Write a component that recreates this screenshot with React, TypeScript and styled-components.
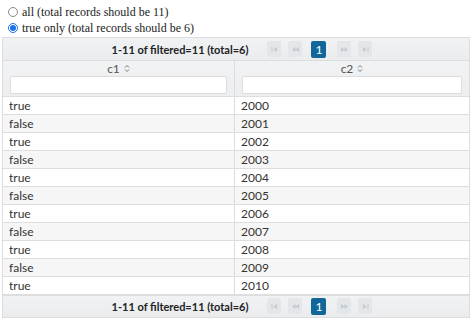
import React from "react";
import styled, { createGlobalStyle } from "styled-components";

const Global = createGlobalStyle`
  body { margin: 0; background: #fff; }
`;

const Page = styled.div`
  padding: 4px 4px 0 2px;
`;

const RadioRow = styled.label`
  display: flex;
  align-items: center;
  height: 16px;
  font-family: "Liberation Serif", serif;
  font-size: 12px;
  color: #222;
  padding-left: 6px;
  gap: 4px;
`;

const Radio = styled.span<{ $on?: boolean }>`
  width: 10px;
  height: 10px;
  border-radius: 50%;
  box-sizing: border-box;
  border: 1px solid ${(p) => (p.$on ? "#1a73e8" : "#8a8a8a")};
  display: flex;
  align-items: center;
  justify-content: center;
  &::after {
    content: "";
    width: 6px;
    height: 6px;
    border-radius: 50%;
    background: ${(p) => (p.$on ? "#1a73e8" : "transparent")};
  }
`;

const Table = styled.div`
  margin-top: 1px;
  border: 1px solid #ddd;
  font-family: Lato, sans-serif;
  font-size: 12px;
  color: #333;
`;

const Pager = styled.div<{ $top?: boolean }>`
  height: ${(p) => (p.$top ? "22px" : "20px")};
  padding-bottom: ${(p) => (p.$top ? "0" : "1px")};
  display: flex;
  align-items: center;
  justify-content: center;
  gap: 19px;
  background: linear-gradient(#f1f2f4, #eaecee);
  border-${(p) => (p.$top ? "bottom" : "top")}: 1px solid #ddd;
  padding-left: 12px;
`;

const PagerText = styled.span`
  font-weight: bold;
  font-size: 11px;
  color: #222;
`;

const Buttons = styled.div`
  display: flex;
  align-items: center;
  gap: 7px;
`;

const NavBtn = styled.span`
  width: 14px;
  height: 16px;
  display: flex;
  align-items: center;
  justify-content: center;
  background: #e4e7ea;
  border-radius: 2px;
`;

const PageNum = styled.span`
  width: 15px;
  height: 17px;
  display: flex;
  align-items: center;
  justify-content: center;
  background: #11669a;
  color: #fff;
  border-radius: 2px;
  font-size: 12px;
  margin: 0 4px 0 2px;
`;

const Row = styled.div<{ $alt?: boolean; $head?: boolean }>`
  display: grid;
  grid-template-columns: 232px 1fr;
  background: ${(p) => (p.$head ? "linear-gradient(#f1f2f4, #eceef0)" : p.$alt ? "#f6f6f6" : "#fff")};
  border-bottom: 1px solid #dedede;
`;

const HeadCell = styled.div`
  border-right: 1px solid #ddd;
  padding: 0 7px 2px 7px;
  text-align: center;
  &:last-child {
    border-right: none;
  }
`;

const HeadTitle = styled.div`
  color: #555;
  height: 15px;
  line-height: 15px;
  display: flex;
  align-items: center;
  justify-content: center;
  gap: 4px;
`;

const FilterInput = styled.div`
  height: 16px;
  background: #fff;
  border: 1px solid #dcdcdc;
  border-radius: 2px;
`;

const Cell = styled.div`
  height: 17px;
  line-height: 17px;
  padding-left: 6px;
  border-right: 1px solid #ddd;
  &:last-child {
    border-right: none;
  }
`;

const rows = Array.from({ length: 11 }, (_, i) => ({
  c1: i % 2 === 0 ? "true" : "false",
  c2: String(2000 + i),
}));

const SortIcon = () => (
  <svg width="6" height="9" viewBox="0 0 6 9" fill="none" stroke="#777" strokeWidth="1">
    <path d="M1 3.5 L3 1.5 L5 3.5" />
    <path d="M1 5.5 L3 7.5 L5 5.5" />
  </svg>
);

const NavIcon = ({ kind }: { kind: "first" | "prev" | "next" | "last" }) => {
  const c = "#c3c9cf";
  return (
    <svg width="7" height="5" viewBox="0 0 7 5" fill={c}>
      {kind === "first" && (
        <>
          <rect x="0.5" y="0" width="1" height="5" />
          <path d="M6 0 L2.5 2.5 L6 5 Z" />
        </>
      )}
      {kind === "prev" && (
        <>
          <path d="M3.5 0 L0 2.5 L3.5 5 Z" />
          <path d="M7 0 L3.5 2.5 L7 5 Z" />
        </>
      )}
      {kind === "next" && (
        <>
          <path d="M0 0 L3.5 2.5 L0 5 Z" />
          <path d="M3.5 0 L7 2.5 L3.5 5 Z" />
        </>
      )}
      {kind === "last" && (
        <>
          <path d="M1 0 L4.5 2.5 L1 5 Z" />
          <rect x="5.5" y="0" width="1" height="5" />
        </>
      )}
    </svg>
  );
};

function PagerBar({ top }: { top?: boolean }) {
  return (
    <Pager $top={top}>
      <PagerText>1-11 of filtered=11 (total=6)</PagerText>
      <Buttons>
        <NavBtn>
          <NavIcon kind="first" />
        </NavBtn>
        <NavBtn>
          <NavIcon kind="prev" />
        </NavBtn>
        <PageNum>1</PageNum>
        <NavBtn>
          <NavIcon kind="next" />
        </NavBtn>
        <NavBtn>
          <NavIcon kind="last" />
        </NavBtn>
      </Buttons>
    </Pager>
  );
}

export default function App() {
  return (
    <Page>
      <Global />
      <RadioRow>
        <Radio />
        all (total records should be 11)
      </RadioRow>
      <RadioRow>
        <Radio $on />
        true only (total records should be 6)
      </RadioRow>
      <Table>
        <PagerBar top />
        <Row $head>
          <HeadCell>
            <HeadTitle>
              c1
              <SortIcon />
            </HeadTitle>
            <FilterInput />
          </HeadCell>
          <HeadCell>
            <HeadTitle>
              c2
              <SortIcon />
            </HeadTitle>
            <FilterInput />
          </HeadCell>
        </Row>
        {rows.map((r, i) => (
          <Row key={i} $alt={i % 2 === 1}>
            <Cell>{r.c1}</Cell>
            <Cell>{r.c2}</Cell>
          </Row>
        ))}
        <PagerBar />
      </Table>
    </Page>
  );
}
